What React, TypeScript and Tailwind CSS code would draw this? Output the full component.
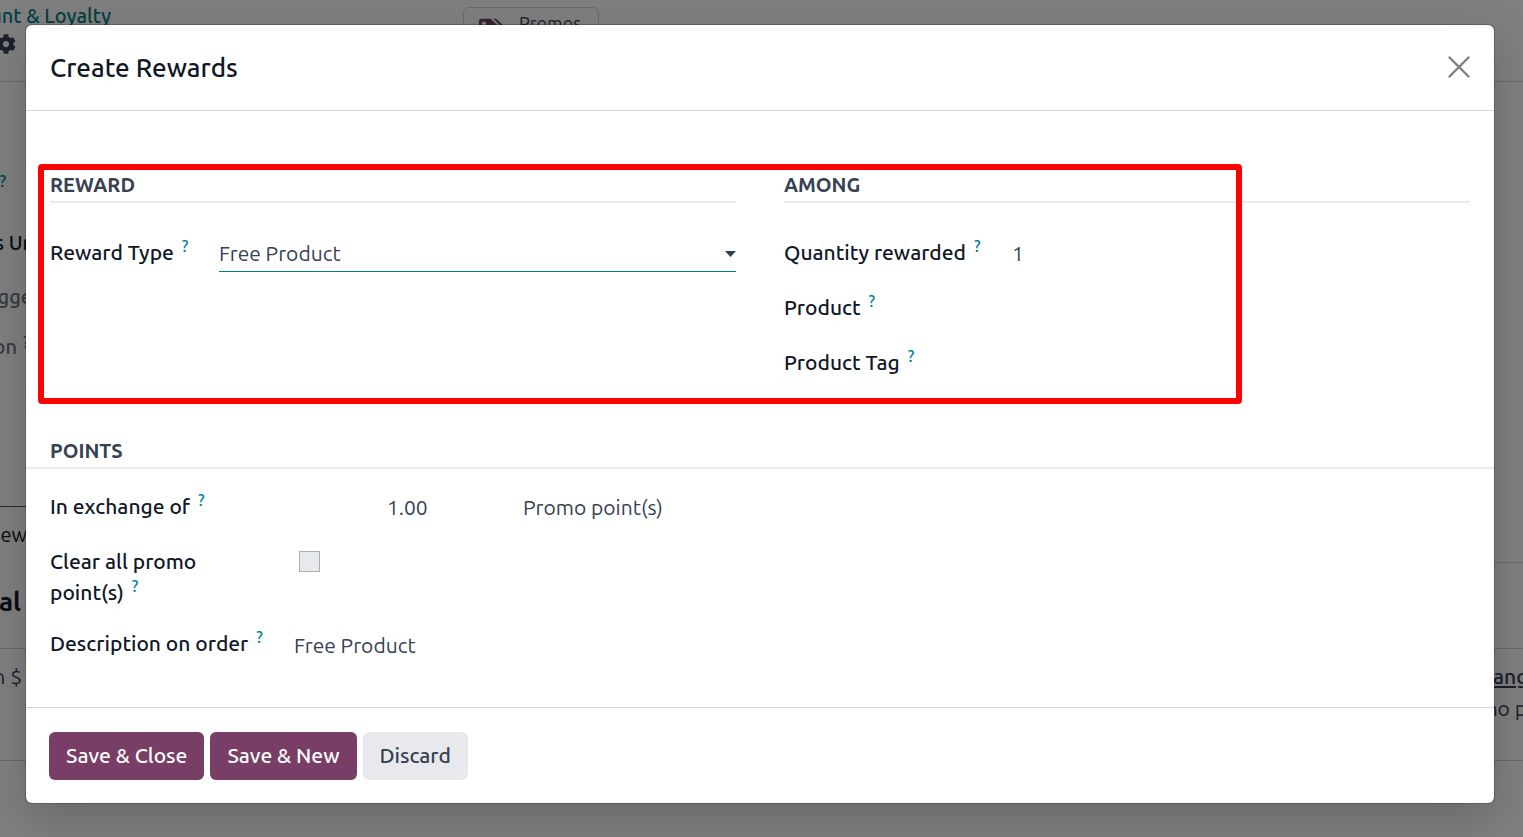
import { ReactNode } from "react";
import { FaCog, FaTags } from "react-icons/fa";

function Label({ htmlFor, children }: { htmlFor: string; children: ReactNode }) {
  return (
    <label htmlFor={htmlFor} className="font-medium text-gray-900">
      {children} <sup className="-top-[8px] ml-[3px] text-base leading-none font-medium text-[#0180a5]">?</sup>
    </label>
  );
}

function SectionTitle({ children }: { children: ReactNode }) {
  return (
    <h2 className="border-b-2 border-[#eaebee] pb-px text-[20px] leading-[31px] font-bold text-gray-700 uppercase">
      {children}
    </h2>
  );
}

function PageBehind() {
  return (
    <div className="min-h-screen bg-white whitespace-nowrap text-gray-700" aria-hidden="true">
      <header className="flex h-[82px] overflow-hidden border-b border-gray-300">
        <div className="flex w-[111px] flex-col">
          <div className="flex justify-end overflow-hidden text-xl leading-8 font-medium text-[#017e84]">
            unt &amp; Loyalty
          </div>
          <div className="flex w-4 justify-end overflow-hidden pt-[2px]">
            <FaCog className="size-5 shrink-0 text-gray-700" />
          </div>
        </div>
        <div className="mt-[7px] ml-88 flex h-14 w-[136px] gap-3 self-start rounded-md border border-gray-300 px-[15px]">
          <FaTags className="mt-2 size-7 shrink-0 text-[#714b67]" />
          <span className="text-lg leading-[30px]">Promos</span>
        </div>
      </header>

      <div className="flex w-[26px] flex-col overflow-hidden pt-[84px] text-xl leading-[30px]">
        <span className="flex w-[6px] justify-end text-base leading-[30px] font-medium text-[#0180a5]">?</span>
        <span className="mt-8 flex w-[34px] justify-end font-medium text-gray-900">s Un</span>
        <span className="mt-6 flex w-8 justify-end font-medium text-gray-500">gge</span>
        <div className="mt-5 flex gap-[6px]">
          <span className="flex w-[17px] shrink-0 justify-end font-medium text-gray-500">on</span>
          <span className="text-base leading-5 font-medium text-[#0180a5]">?</span>
        </div>
      </div>

      <div className="mt-[144px] flex h-[57px]">
        <div className="w-1/2 border-t border-[#714b67]">
          <span className="flex w-[27px] justify-end pt-[13px] text-xl leading-[30px] text-gray-900">ew</span>
        </div>
        <div className="w-1/2 border-b border-gray-300" />
      </div>
      <div className="h-[86px] border-b border-gray-300 pt-6">
        <span className="flex w-[21px] justify-end text-[26px] leading-[30px] font-bold text-gray-900">al</span>
      </div>
      <div className="flex h-28 justify-between border-b border-gray-300 pt-[11px] text-[21px] leading-8">
        <span className="flex w-[22px] justify-end">n $</span>
        <div className="flex w-[30px] flex-col overflow-hidden">
          <span className="font-medium underline">ange</span>
          <span className="flex w-[34px] shrink-0 justify-end">no p</span>
        </div>
      </div>
    </div>
  );
}

const field = "h-[31px] min-w-0 bg-transparent p-0 text-gray-700 outline-none";

export default function App() {
  return (
    <div className="relative h-screen overflow-hidden font-['Ubuntu','Noto_Sans',sans-serif]">
      <PageBehind />

      <div className="absolute inset-0 flex bg-black/50 pt-[25px] pr-[29px] pb-[34px] pl-[26px]">
        <div
          role="dialog"
          aria-labelledby="dialog-title"
          className="flex min-w-0 flex-1 flex-col rounded-md bg-white text-[21px] leading-[31px] text-gray-700 shadow-[0_0_0_1px_rgba(0,0,0,0.2),0_16px_48px_rgba(0,0,0,0.18)]"
        >
          <header className="flex h-[86px] shrink-0 items-center justify-between border-b border-gray-300 px-6 pb-px">
            <h1 id="dialog-title" className="text-[26px] font-medium text-gray-900">
              Create Rewards
            </h1>
            <button type="button" aria-label="Close" className="text-[#7f7f7f]">
              <svg viewBox="0 0 22 22" className="size-[22px]" fill="none" stroke="currentColor" strokeWidth="2.4" strokeLinecap="round">
                <path d="M1.5 1.5 20.5 20.5M20.5 1.5 1.5 20.5" />
              </svg>
            </button>
          </header>

          <div className="relative flex-1 pt-[58px]">
            <div className="grid grid-cols-2 gap-12 px-6">
              <section>
                <SectionTitle>Reward</SectionTitle>
                <div className="mt-[34px] flex">
                  <div className="w-[169px] shrink-0">
                    <Label htmlFor="reward-type">Reward Type</Label>
                  </div>
                  <div className="relative flex-1">
                    <select
                      id="reward-type"
                      defaultValue="product"
                      className="h-[35px] w-full appearance-none border-b border-[#017e84] bg-transparent pb-px text-gray-700 outline-none"
                    >
                      <option value="product">Free Product</option>
                      <option value="discount">Discount</option>
                    </select>
                    <svg viewBox="0 0 11 6" className="pointer-events-none absolute top-[14px] right-0 h-[6px] w-[11px] fill-gray-700">
                      <path d="M0 0h11L5.5 6z" />
                    </svg>
                  </div>
                </div>
              </section>

              <section>
                <SectionTitle>Among</SectionTitle>
                <div className="mt-[34px] grid grid-cols-[228px_1fr] gap-y-6">
                  <Label htmlFor="quantity">Quantity rewarded</Label>
                  <input id="quantity" defaultValue="1" className={`${field} pt-[2px]`} />
                  <Label htmlFor="product">Product</Label>
                  <input id="product" className={field} />
                  <Label htmlFor="product-tag">Product Tag</Label>
                  <input id="product-tag" className={field} />
                </div>
              </section>
            </div>

            <section className="mt-[57px]">
              <div className="[&>h2]:pl-6">
                <SectionTitle>Points</SectionTitle>
              </div>
              <div className="mt-[22px] grid grid-cols-[244px_1fr] px-6">
                <Label htmlFor="exchange">In exchange of</Label>
                <div className="flex h-[31px] pl-[93px]">
                  <input id="exchange" defaultValue="1.00" className={`${field} w-[136px] pt-[2px]`} />
                  <span className="pt-px">Promo point(s)</span>
                </div>
                <div className="mt-6 w-[170px]">
                  <Label htmlFor="clear-all">Clear all promo point(s)</Label>
                </div>
                <div className="mt-6 flex pt-[5px] pl-[5px]">
                  <input
                    id="clear-all"
                    type="checkbox"
                    className="size-[21px] appearance-none border border-[#adaeb3] bg-[#e7e9ed]"
                  />
                </div>
                <div className="mt-5">
                  <Label htmlFor="description">Description on order</Label>
                </div>
                <input id="description" defaultValue="Free Product" className={`${field} mt-[21px] pt-[2px]`} />
              </div>
            </section>

            {/* highlight drawn over the reward form */}
            <div className="pointer-events-none absolute top-[53px] left-3 h-60 w-[82%] rounded-[4px] border-6 border-[#ff0000]" />
          </div>

          <footer className="flex h-24 shrink-0 items-center gap-[6px] border-t border-gray-300 px-[23px] font-medium">
            <button type="button" className="h-12 rounded-md bg-[#783e66] px-[17px] text-white">
              Save &amp; Close
            </button>
            <button type="button" className="h-12 rounded-md bg-[#783e66] px-[17px] text-white">
              Save &amp; New
            </button>
            <button type="button" className="h-12 rounded-md bg-[#e7e9ed] px-[17px] text-gray-700">
              Discard
            </button>
          </footer>
        </div>
      </div>
    </div>
  );
}
